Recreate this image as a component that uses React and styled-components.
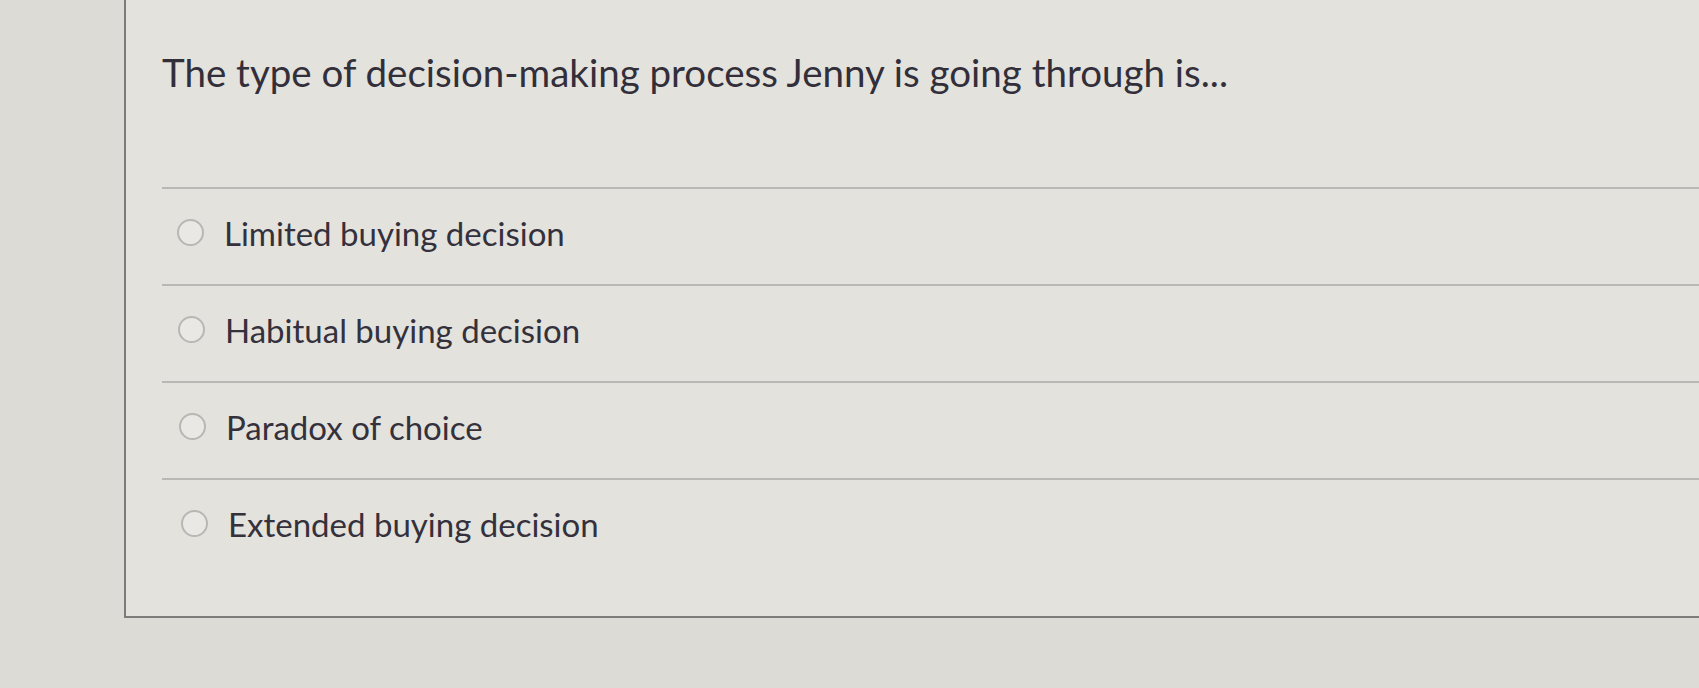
import React from "react";
import styled, { createGlobalStyle } from "styled-components";

const Global = createGlobalStyle`
  html, body { margin: 0; padding: 0; }
  body {
    width: 1699px;
    height: 688px;
    overflow: hidden;
    background: #dcdbd6;
    font-family: Lato, "Noto Sans", sans-serif;
  }
`;

const Page = styled.div`
  display: flex;
  height: 688px;
  padding-left: 124px;
  box-sizing: border-box;
`;

const Panel = styled.section`
  flex: 1;
  align-self: flex-start;
  height: 618px;
  box-sizing: border-box;
  background: #e3e2dd;
  border-left: 2px solid #7d7c7a;
  border-bottom: 2px solid #7d7c7a;
  padding: 49px 0 0 36px;
  display: flex;
  flex-direction: column;
`;

const Question = styled.h1`
  margin: 0 0 92px 0;
  font-size: 38.5px;
  line-height: 46px;
  font-weight: 400;
  color: #322f3a;
`;

const Options = styled.div`
  display: flex;
  flex-direction: column;
`;

const Row = styled.label`
  display: flex;
  align-items: center;
  height: 97px;
  box-sizing: border-box;
  border-top: 2px solid #b9b8b4;
  padding-left: ${(p) => p.$indent}px;
  padding-bottom: 8px;
  gap: 20px;
`;

const Radio = styled.span`
  width: 27px;
  height: 27px;
  box-sizing: border-box;
  border-radius: 50%;
  border: 2px solid #b8b7b3;
  background: #e9e8e4;
  flex: none;
`;

const OptionText = styled.span`
  font-size: 33px;
  line-height: 40px;
  color: #34313c;
`;

const options = [
  { text: "Limited buying decision", indent: 15 },
  { text: "Habitual buying decision", indent: 16 },
  { text: "Paradox of choice", indent: 17 },
  { text: "Extended buying decision", indent: 19 },
];

export default function App() {
  return (
    <>
      <Global />
      <Page>
        <Panel>
          <Question>The type of decision-making process Jenny is going through is...</Question>
          <Options>
            {options.map((o) => (
              <Row key={o.text} $indent={o.indent}>
                <Radio />
                <OptionText>{o.text}</OptionText>
              </Row>
            ))}
          </Options>
        </Panel>
      </Page>
    </>
  );
}
